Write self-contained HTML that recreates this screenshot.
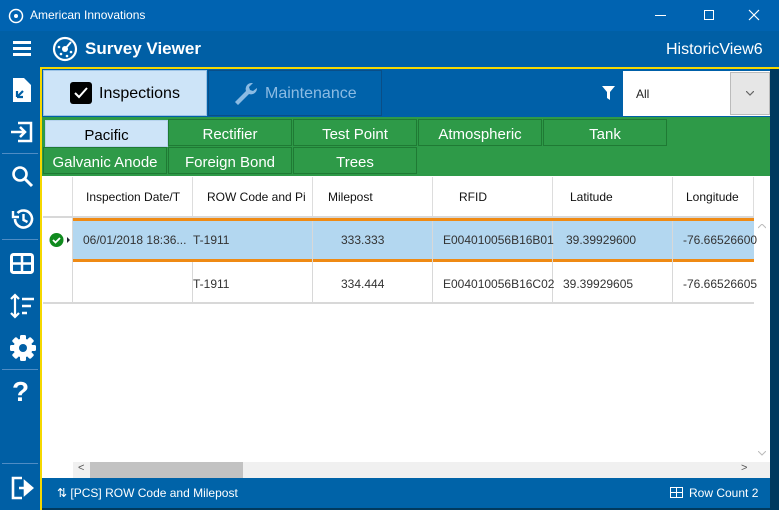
<!DOCTYPE html>
<html><head><style>
*{margin:0;padding:0;box-sizing:border-box}
body{width:779px;height:510px;overflow:hidden;background:#0064ae;font-family:"Liberation Sans",sans-serif;position:relative}
.a{position:absolute}
.t{color:#fff}
.gb{position:absolute;background:#2e9a48;border:1px solid #1f7a34;color:#fff;font-size:15px;text-align:center;line-height:30px;height:27px;overflow:hidden}
.hd{position:absolute;top:177px;height:40px;border-right:1px solid #ddd;font-size:12px;color:#111;line-height:40px;background:#fff}
.c{position:absolute;font-size:12px;color:#333;line-height:40px}
.vl{position:absolute;width:1px;background:#d8d8d8}
</style></head><body>
<!-- title -->
<div class="a" style="left:0;top:0;width:779px;height:31px;background:#0063b1"></div>
<svg class="a" style="left:8px;top:8px" width="16" height="16"><circle cx="8" cy="8" r="6.5" fill="none" stroke="#fff" stroke-width="1.5"/><circle cx="8" cy="8" r="2" fill="#fff"/></svg>
<div class="a t" style="left:30px;top:8px;font-size:12px">American Innovations</div>
<div class="a" style="left:655px;top:15px;width:11px;height:1px;background:#fff"></div>
<div class="a" style="left:704px;top:10px;width:10px;height:10px;border:1px solid #fff"></div>
<svg class="a" style="left:748px;top:9px" width="12" height="12"><path d="M1 1l10 10M11 1L1 11" stroke="#fff" stroke-width="1.2"/></svg>
<!-- header -->
<div class="a" style="left:0;top:31px;width:779px;height:37px;background:#005fa5"></div>
<svg class="a" style="left:52px;top:36px" width="26" height="26"><circle cx="13" cy="13" r="11" fill="none" stroke="#fff" stroke-width="2.2"/><circle cx="13" cy="13" r="3" fill="#fff"/><line x1="13" y1="13" x2="19" y2="6" stroke="#fff" stroke-width="2"/><circle cx="7" cy="11" r="1.3" fill="#fff"/><circle cx="9" cy="18" r="1.3" fill="#fff"/><circle cx="15" cy="20" r="1.3" fill="#fff"/><circle cx="19" cy="16" r="1.3" fill="#fff"/></svg>
<div class="a t" style="left:85px;top:39px;font-size:17px;font-weight:bold">Survey Viewer</div>
<div class="a t" style="left:666px;top:41px;font-size:16px">HistoricView6</div>
<!-- sidebar -->
<div class="a" style="left:0;top:31px;width:40px;height:479px;background:#005fa5"></div>
<div class="a" style="left:40px;top:67px;width:739px;height:2px;background:#f5d800"></div>
<div class="a" style="left:40px;top:67px;width:2px;height:443px;background:#f5d800"></div>
<div class="a" style="left:13px;top:41px;width:18px;height:2.5px;background:#fff;box-shadow:0 6px 0 #fff,0 12px 0 #fff"></div>
<svg class="a" style="left:12px;top:77px" width="20" height="26"><path d="M1 1h11l7 7v17H1z" fill="#fff"/><path d="M5 20l6-6M5 20v-6M5 20h6" stroke="#005fa5" stroke-width="2.2"/></svg>
<svg class="a" style="left:10px;top:120px" width="24" height="24"><path d="M8 3h13v18H8" fill="none" stroke="#fff" stroke-width="2.5"/><path d="M1 12h13M10 7l5 5-5 5" fill="none" stroke="#fff" stroke-width="2.5"/></svg>
<div class="a" style="left:2px;top:153px;width:36px;height:1px;background:#4f8cc4"></div>
<svg class="a" style="left:11px;top:165px" width="24" height="24"><circle cx="9" cy="9" r="6.5" fill="none" stroke="#fff" stroke-width="2.6"/><line x1="14" y1="14" x2="21" y2="21" stroke="#fff" stroke-width="3"/></svg>
<svg class="a" style="left:10px;top:206px" width="26" height="26"><path d="M5 13a8.5 8.5 0 1 0 2.5-6" fill="none" stroke="#fff" stroke-width="2.6"/><path d="M3 5v6h6" fill="none" stroke="#fff" stroke-width="2.4"/><path d="M13.5 8v6l4 2" fill="none" stroke="#fff" stroke-width="2.4"/></svg>
<div class="a" style="left:2px;top:239px;width:36px;height:1px;background:#4f8cc4"></div>
<svg class="a" style="left:10px;top:253px" width="24" height="22"><rect x="1.5" y="1.5" width="21" height="18" rx="2" fill="none" stroke="#fff" stroke-width="3"/><line x1="1.5" y1="10.5" x2="22" y2="10.5" stroke="#fff" stroke-width="2.5"/><line x1="12" y1="2" x2="12" y2="19" stroke="#fff" stroke-width="2.5"/></svg>
<svg class="a" style="left:10px;top:293px" width="26" height="26"><path d="M5 2v22M1 6l4-4 4 4M1 20l4 4 4-4" fill="none" stroke="#fff" stroke-width="2.2"/><path d="M12 6h12M12 13h9M12 20h5" stroke="#fff" stroke-width="2.4"/></svg>
<svg class="a" style="left:9px;top:334px" width="28" height="28" viewBox="0 0 28 28"><g fill="#fff" transform="translate(14 14)"><rect x="-3" y="-13" width="6" height="26" rx="1.5"/><rect x="-3" y="-13" width="6" height="26" rx="1.5" transform="rotate(45)"/><rect x="-3" y="-13" width="6" height="26" rx="1.5" transform="rotate(90)"/><rect x="-3" y="-13" width="6" height="26" rx="1.5" transform="rotate(135)"/><circle r="9.5"/></g><circle cx="14" cy="14" r="4" fill="#005fa5"/></svg>
<div class="a" style="left:2px;top:369px;width:36px;height:1px;background:#4f8cc4"></div>
<div class="a t" style="left:12px;top:376px;font-size:28px;font-weight:bold">?</div>
<div class="a" style="left:2px;top:463px;width:36px;height:1px;background:#4f8cc4"></div>
<svg class="a" style="left:10px;top:475px" width="26" height="26"><path d="M12 3H3v20h9" fill="none" stroke="#fff" stroke-width="2.6"/><path d="M9 13h10M15 7l7 6-7 6z" fill="#fff" stroke="#fff" stroke-width="2.6"/></svg>
<!-- tab row -->
<div class="a" style="left:42px;top:69px;width:734px;height:48px;background:#0060a8"></div>
<div class="a" style="left:43px;top:70px;width:164px;height:46px;background:#cde4f8;border:1px solid #9cc3e6"></div>
<div class="a" style="left:70px;top:82px;width:22px;height:22px;background:#000;border-radius:3px"></div>
<svg class="a" style="left:70px;top:82px" width="22" height="22"><path d="M5 11l4 4 8-9" fill="none" stroke="#fff" stroke-width="2"/></svg>
<div class="a" style="left:99px;top:85px;font-size:16px;color:#000">Inspections</div>
<div class="a" style="left:208px;top:70px;width:174px;height:46px;border:1px solid #0a4e87;background:#0062aa"></div>
<svg class="a" style="left:232px;top:80px" width="28" height="28"><path d="M20 3a6 6 0 0 0-6 8L3 22l3 3 11-11a6 6 0 0 0 8-6l-4 3-3-1-1-3 4-4z" fill="#8bbbe3"/></svg>
<div class="a" style="left:265px;top:85px;font-size:16px;color:#8bbbe3">Maintenance</div>
<svg class="a" style="left:602px;top:86px" width="13" height="14"><path d="M0 0h13L8 6v8L5 12V6z" fill="#fff"/></svg>
<div class="a" style="left:623px;top:71px;width:147px;height:45px;background:#fff"></div>
<div class="a" style="left:636px;top:87px;font-size:12px;color:#222">All</div>
<div class="a" style="left:730px;top:72px;width:40px;height:43px;background:#e6e6e6;border:1px solid #bbb"></div>
<svg class="a" style="left:746px;top:91px" width="8" height="5"><path d="M0 0l4 4 4-4" fill="none" stroke="#666" stroke-width="1.2"/></svg>
<!-- green -->
<div class="a" style="left:42px;top:117px;width:734px;height:59px;background:#2e9a48"></div>
<div class="gb" style="left:45px;top:120px;width:123px;background:#cde4f8;color:#000;border-color:#b7d3ee">Pacific</div>
<div class="gb" style="left:168px;top:119px;width:124px">Rectifier</div>
<div class="gb" style="left:293px;top:119px;width:124px">Test Point</div>
<div class="gb" style="left:418px;top:119px;width:124px">Atmospheric</div>
<div class="gb" style="left:543px;top:119px;width:124px">Tank</div>
<div class="gb" style="left:43px;top:147px;width:124px">Galvanic Anode</div>
<div class="gb" style="left:168px;top:147px;width:124px">Foreign Bond</div>
<div class="gb" style="left:293px;top:147px;width:124px">Trees</div>
<!-- grid -->
<div class="a" style="left:42px;top:176px;width:734px;height:302px;background:#fff"></div>
<div class="hd" style="left:43px;width:30px"></div>
<div class="hd" style="left:73px;width:120px;padding-left:13px">Inspection Date/T</div>
<div class="hd" style="left:193px;width:120px;padding-left:14px">ROW Code and Pi</div>
<div class="hd" style="left:313px;width:120px;padding-left:15px">Milepost</div>
<div class="hd" style="left:433px;width:120px;padding-left:26px">RFID</div>
<div class="hd" style="left:553px;width:120px;padding-left:17px">Latitude</div>
<div class="hd" style="left:673px;width:81px;padding-left:13px">Longitude</div>
<div class="a" style="left:43px;top:216px;width:711px;height:2px;background:#d8d8d8"></div>
<div class="a" style="left:73px;top:218px;width:681px;height:44px;background:#b3d7f0;border-top:3px solid #ef8a14;border-bottom:3px solid #ef8a14"></div>
<div class="a" style="left:43px;top:302px;width:711px;height:2px;background:#d8d8d8"></div>
<div class="vl" style="left:72px;top:217px;height:86px"></div>
<div class="vl" style="left:192px;top:262px;height:41px"></div>
<div class="vl" style="left:312px;top:221px;height:82px"></div>
<div class="vl" style="left:432px;top:221px;height:82px"></div>
<div class="vl" style="left:552px;top:221px;height:82px"></div>
<div class="vl" style="left:672px;top:221px;height:82px"></div>
<svg class="a" style="left:49px;top:233px" width="22" height="14"><circle cx="7.5" cy="7" r="7" fill="#108a1e"/><path d="M4 7l2.5 2.5L11 5" fill="none" stroke="#fff" stroke-width="1.8"/><path d="M18 4l3 3-3 3z" fill="#223"/></svg>
<div class="c" style="left:83px;top:220px">06/01/2018 18:36...</div>
<div class="c" style="left:193px;top:220px">T-1911</div>
<div class="c" style="left:341px;top:220px">333.333</div>
<div class="c" style="left:443px;top:220px">E004010056B16B01</div>
<div class="c" style="left:566px;top:220px">39.39929600</div>
<div class="c" style="left:683px;top:220px">-76.66526600</div>
<div class="c" style="left:193px;top:264px">T-1911</div>
<div class="c" style="left:341px;top:264px">334.444</div>
<div class="c" style="left:443px;top:264px">E004010056B16C02</div>
<div class="c" style="left:563px;top:264px">39.39929605</div>
<div class="c" style="left:683px;top:264px">-76.66526605</div>
<svg class="a" style="left:758px;top:224px" width="8" height="5"><path d="M0 4l4-4 4 4" fill="none" stroke="#bbb"/></svg>
<svg class="a" style="left:758px;top:451px" width="8" height="5"><path d="M0 0l4 4 4-4" fill="none" stroke="#bbb"/></svg>
<div class="a" style="left:73px;top:462px;width:681px;height:16px;background:#f0f0f0"></div>
<div class="a" style="left:754px;top:462px;width:16px;height:16px;background:#f0f0f0"></div>
<div class="a" style="left:90px;top:462px;width:153px;height:16px;background:#c2c2c2"></div>
<div class="a" style="left:78px;top:462px;font-size:11px;color:#555">&lt;</div>
<div class="a" style="left:741px;top:462px;font-size:11px;color:#555">&gt;</div>
<div class="a" style="left:770px;top:69px;width:9px;height:441px;background:#003a5f"></div>
<!-- status -->
<div class="a" style="left:42px;top:478px;width:728px;height:30px;background:#0063a8"></div>
<div class="a" style="left:42px;top:508px;width:737px;height:2px;background:#003a5f"></div>
<div class="a t" style="left:57px;top:486px;font-size:12px">⇅ [PCS] ROW Code and Milepost</div>
<svg class="a" style="left:670px;top:487px" width="13" height="11"><rect x=".5" y=".5" width="12" height="10" fill="none" stroke="#fff"/><path d="M0 5.5h13M6.5 0v11" stroke="#fff"/></svg>
<div class="a t" style="left:689px;top:486px;font-size:12px">Row Count 2</div>
</body></html>
